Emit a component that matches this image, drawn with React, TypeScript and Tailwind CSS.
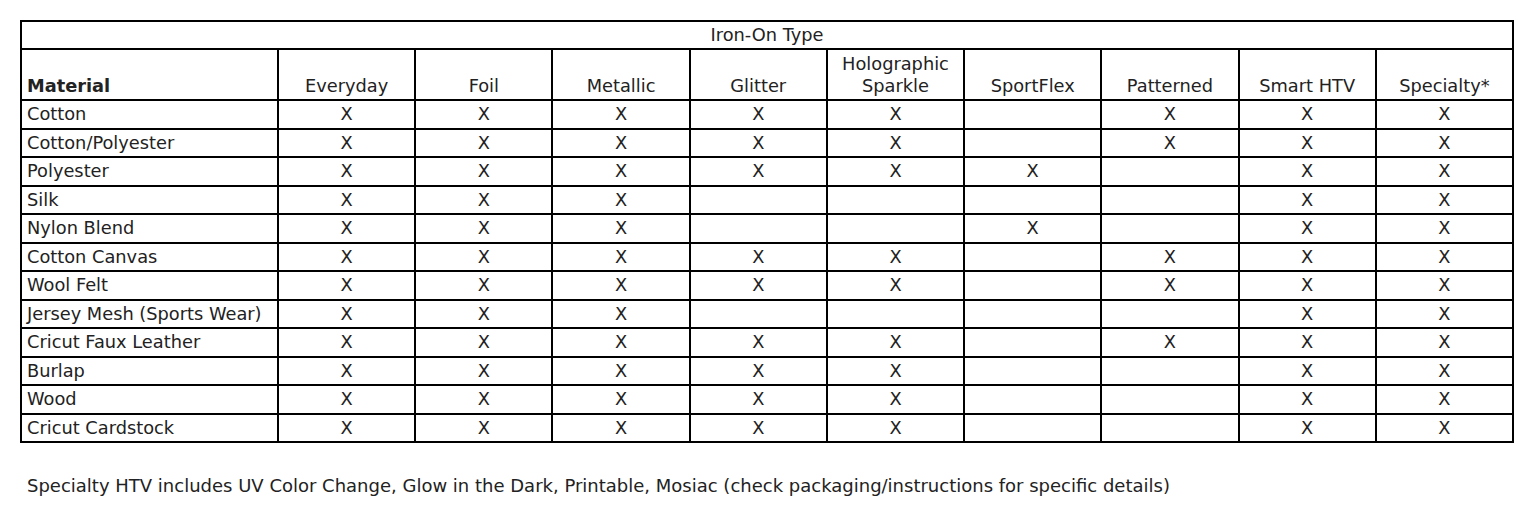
import React from "react";

const cols = ["Everyday", "Foil", "Metallic", "Glitter", "Holographic Sparkle", "SportFlex", "Patterned", "Smart HTV", "Specialty*"];

const rows: [string, string][] = [
  ["Cotton", "11111_111"],
  ["Cotton/Polyester", "11111_111"],
  ["Polyester", "111111_11"],
  ["Silk", "111____11"],
  ["Nylon Blend", "111__1_11"],
  ["Cotton Canvas", "11111_111"],
  ["Wool Felt", "11111_111"],
  ["Jersey Mesh (Sports Wear)", "111____11"],
  ["Cricut Faux Leather", "11111_111"],
  ["Burlap", "11111__11"],
  ["Wood", "11111__11"],
  ["Cricut Cardstock", "11111__11"],
];

export default function App() {
  return (
    <div className="w-[1536px] h-[512px] bg-white text-[#222] overflow-hidden" style={{ fontFamily: '"DejaVu Sans", sans-serif' }}>
      <div className="pt-[20px] pl-[20px]">
        <table className="w-[1494px] table-fixed border-collapse border-2 border-black text-[17.8px]">
          <colgroup>
            <col className="w-[257px]" />
            {cols.map((c) => (
              <col key={c} />
            ))}
          </colgroup>
          <tbody>
            <tr className="h-[28px]">
              <td colSpan={10} className="border-2 border-black text-center align-middle leading-[22px]">
                Iron-On Type
              </td>
            </tr>
            <tr className="h-[51px]">
              <td className="border-2 border-black align-bottom px-[5px] pb-[2px] font-bold leading-[22px]">Material</td>
              {cols.map((c) => (
                <td key={c} className="border-2 border-black align-bottom text-center pb-[2px] leading-[22px] whitespace-nowrap">
                  {c === "Holographic Sparkle" ? (
                    <>
                      Holographic
                      <br />
                      Sparkle
                    </>
                  ) : (
                    c
                  )}
                </td>
              ))}
            </tr>
            {rows.map(([name, m]) => (
              <tr key={name} className="h-[28.5px]">
                <td className="border-2 border-black px-[5px] align-middle leading-[22px] whitespace-nowrap">{name}</td>
                {cols.map((c, i) => (
                  <td key={c} className="border-2 border-black text-center align-middle leading-[22px]">
                    {m[i] === "1" ? "X" : ""}
                  </td>
                ))}
              </tr>
            ))}
          </tbody>
        </table>
      </div>
      <div className="pl-[27px] pt-[32px] text-[18px] leading-[22px]">
        Specialty HTV includes UV Color Change, Glow in the Dark, Printable, Mosiac (check packaging/instructions for specific details)
      </div>
    </div>
  );
}
